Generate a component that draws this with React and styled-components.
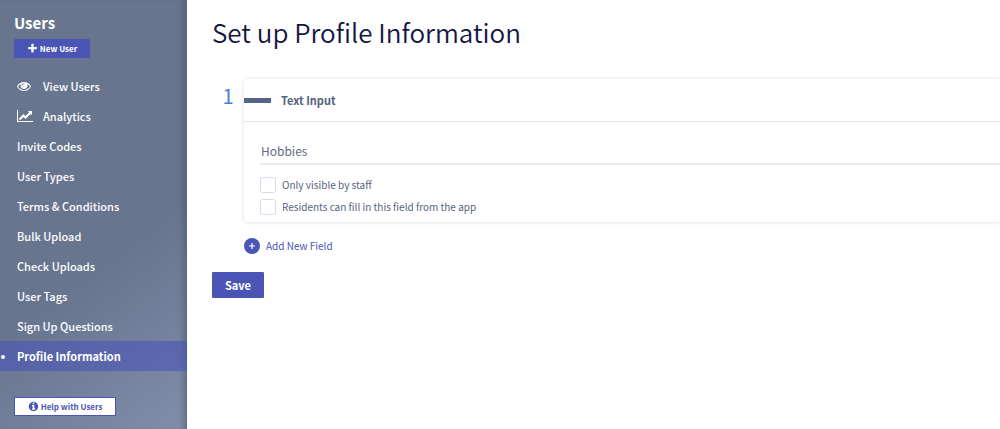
import React, { useState } from 'react';
import styled, { createGlobalStyle } from 'styled-components';

const GlobalStyle = createGlobalStyle`
  * {
    box-sizing: border-box;
  }

  body {
    margin: 0;
    background: #fff;
    overflow: hidden;
  }

  body, button, input {
    font-family: 'Noto Sans CJK SC', 'Noto Sans', sans-serif;
  }
`

const Layout = styled.div`
  display: flex;
  min-height: 100vh;
`

const Sidebar = styled.aside`
  flex: 0 0 187px;
  padding: 11px 0;
  color: #fff;
  background: linear-gradient(143deg, #68758f 0%, #68758f 60%, #818eab 100%);
  box-shadow: inset -1px 0 0 #5d6982, inset -7px 0 7px -4px rgba(50, 60, 85, 0.4);
`

const SidebarTitle = styled.h2`
  margin: 0 0 4px;
  padding: 0 14px;
  font-size: 15px;
  line-height: 24px;
  font-weight: 700;
`

const SmallButton = styled.button`
  display: flex;
  align-items: center;
  justify-content: center;
  gap: 2px;
  width: ${props => props.$outline ? '102px' : '76px'};
  height: 19px;
  margin: 0 14px;
  padding: 0;
  border: 1px solid #4a55b5;
  border-radius: ${props => props.$outline ? '0' : '1px'};
  background: ${props => props.$outline ? '#fff' : '#4a55b5'};
  color: ${props => props.$outline ? '#4a55b5' : '#fff'};
  font-size: 8px;
  line-height: 16px;
  font-weight: 700;
`

const Nav = styled.ul`
  margin: 13px 0 26px;
  padding: 0;
  list-style: none;
`

const NavLink = styled.a`
  display: flex;
  align-items: center;
  height: 30px;
  padding-left: 17px;
  position: relative;
  color: #fff;
  font-size: 11px;
  line-height: 30px;
  font-weight: ${props => props.$active ? 700 : 500};
  text-decoration: none;
  background: ${props => props.$active ? 'rgba(74, 85, 181, 0.6)' : 'transparent'};

  &::before {
    content: '';
    display: ${props => props.$active ? 'block' : 'none'};
    position: absolute;
    left: 1px;
    top: 14px;
    width: 4px;
    height: 4px;
    border-radius: 50%;
    background: #fff;
  }
`

const NavIcon = styled.span`
  display: flex;
  flex: 0 0 26px;
`

const Main = styled.main`
  flex: 1;
  min-width: 0;
  padding: 12px 0 12px 25px;
`

const PageTitle = styled.h1`
  margin: 0 0 27px;
  font-size: 26px;
  line-height: 40px;
  font-weight: 350;
  color: #14163f;
`

const Field = styled.div`
  display: flex;
`

const FieldNumber = styled.div`
  flex: 0 0 32px;
  text-align: center;
  font-size: 20px;
  line-height: 34px;
  font-weight: 400;
  color: #4480d2;
`

const Card = styled.section`
  flex: 1;
  min-width: 0;
  border-radius: 3px 0 0 3px;
  background: #fff;
  box-shadow: 0 0 4px rgba(0, 0, 0, 0.14);
`

const CardHeader = styled.header`
  display: flex;
  align-items: center;
  gap: 10px;
  height: 43px;
  border-bottom: 1px solid #e2e3ef;
`

const Handle = styled.span`
  width: 27px;
  height: 5px;
  background: #56648a;
`

const CardTitle = styled.h3`
  margin: 0;
  font-size: 11px;
  line-height: 20px;
  font-weight: 700;
  color: #56617b;
`

const CardBody = styled.div`
  display: flex;
  flex-direction: column;
  gap: 6px;
  padding: 16px 0 7px 16px;
`

const TextInput = styled.input`
  display: block;
  width: 100%;
  height: 27px;
  margin-bottom: 6px;
  padding: 0 1px;
  border: 0;
  border-bottom: 2px solid #e8e8f5;
  outline: 0;
  font-size: 12px;
  color: #626c83;
`

const CheckRow = styled.label`
  display: flex;
  align-items: center;
  gap: 6px;
  height: 16px;
  font-size: 10px;
  line-height: 16px;
  color: #58637c;
`

const Checkbox = styled.input`
  appearance: none;
  flex: none;
  width: 16px;
  height: 16px;
  margin: 0;
  border: 1px solid #d8dbea;
  border-radius: 3px;
  background: #fff;

  &:checked {
    background: #4a55b5;
  }
`

const AddButton = styled.button`
  display: flex;
  align-items: center;
  gap: 6px;
  margin: 16px 0 0 32px;
  padding: 0;
  border: 0;
  background: none;
  color: #4a55b5;
  font-size: 10px;
  line-height: 16px;
`

const SaveButton = styled.button`
  display: block;
  width: 52px;
  height: 26px;
  margin-top: 18px;
  padding: 0;
  border: 0;
  border-radius: 1px;
  background: #4a55b5;
  color: #fff;
  font-size: 11px;
  line-height: 26px;
  font-weight: 700;
`

const ICONS = {
  eye: {
    box: '0 0 1792 1792',
    path: 'M1664 960q-152-236-381-353 61 104 61 225 0 185-131.5 316.5t-316.5 131.5-316.5-131.5-131.5-316.5q0-121 61-225-229 117-381 353 133 205 333.5 326.5t434.5 121.5 434.5-121.5 333.5-326.5zm-720-384q0-20-14-34t-34-14q-125 0-214.5 89.5t-89.5 214.5q0 20 14 34t34 14 34-14 14-34q0-86 61-147t147-61q20 0 34-14t14-34zm848 384q0 34-20 69-140 230-376.5 368.5t-499.5 138.5-499.5-139-376.5-368q-20-35-20-69t20-69q140-229 376.5-368t499.5-139 499.5 139 376.5 368q20 35 20 69z',
  },
  chart: {
    box: '0 0 2048 1792',
    path: 'M2048 1536v128h-2048v-1536h128v1408h1920zm-128-1248v435q0 21-19.5 29.5t-35.5-7.5l-121-121-633 633q-10 10-23 10t-23-10l-233-233-416 416-192-192 585-585q10-10 23-10t23 10l233 233 464-464-121-121q-16-16-7.5-35.5t29.5-19.5h435q14 0 23 9t9 23z',
  },
  plus: {
    box: '0 0 1792 1792',
    path: 'M1600 736v192q0 40-28 68t-68 28h-416v416q0 40-28 68t-68 28h-192q-40 0-68-28t-28-68v-416h-416q-40 0-68-28t-28-68v-192q0-40 28-68t68-28h416v-416q0-40 28-68t68-28h192q40 0 68 28t28 68v416h416q40 0 68 28t28 68z',
  },
  info: {
    box: '0 0 1792 1792',
    path: 'M1152 1376v-160q0-14-9-23t-23-9h-96v-512q0-14-9-23t-23-9h-320q-14 0-23 9t-9 23v160q0 14 9 23t23 9h96v320h-96q-14 0-23 9t-9 23v160q0 14 9 23t23 9h448q14 0 23-9t9-23zm-128-896v-160q0-14-9-23t-23-9h-192q-14 0-23 9t-9 23v160q0 14 9 23t23 9h192q14 0 23-9t9-23zm640 416q0 209-103 385.5t-279.5 279.5-385.5 103-385.5-103-279.5-279.5-103-385.5 103-385.5 279.5-279.5 385.5-103 385.5 103 279.5 279.5 103 385.5z',
  },
}

function Icon({ name, width, height }) {
  return (
    <svg width={width} height={height} viewBox={ICONS[name].box} fill="currentColor" aria-hidden="true">
      <path d={ICONS[name].path} />
    </svg>
  );
}

const links = [
  { label: 'View Users', icon: 'eye', width: 14 },
  { label: 'Analytics', icon: 'chart', width: 16 },
  { label: 'Invite Codes' },
  { label: 'User Types' },
  { label: 'Terms & Conditions' },
  { label: 'Bulk Upload' },
  { label: 'Check Uploads' },
  { label: 'User Tags' },
  { label: 'Sign Up Questions' },
  { label: 'Profile Information', active: true },
]

function App() {
  const [name, setName] = useState('Hobbies');

  return (
    <Layout>
      <GlobalStyle />
      <Sidebar>
        <SidebarTitle>Users</SidebarTitle>
        <SmallButton type="button">
          <Icon name="plus" width={11} height={11} />
          New User
        </SmallButton>
        <Nav>
          {links.map(link => (
            <li key={link.label}>
              <NavLink href="#" $active={link.active}>
                {
                  link.icon ?
                    <NavIcon>
                      <Icon name={link.icon} width={link.width} height={14} />
                    </NavIcon> : null
                }
                {link.label}
              </NavLink>
            </li>
          ))}
        </Nav>
        <SmallButton type="button" $outline>
          <Icon name="info" width={11} height={11} />
          Help with Users
        </SmallButton>
      </Sidebar>

      <Main>
        <PageTitle>Set up Profile Information</PageTitle>
        <Field>
          <FieldNumber>1</FieldNumber>
          <Card>
            <CardHeader>
              <Handle />
              <CardTitle>Text Input</CardTitle>
            </CardHeader>
            <CardBody>
              <TextInput
                type="text"
                aria-label="Field name"
                value={name}
                onChange={e => setName(e.target.value)}
              />
              <CheckRow>
                <Checkbox type="checkbox" />
                Only visible by staff
              </CheckRow>
              <CheckRow>
                <Checkbox type="checkbox" />
                Residents can fill in this field from the app
              </CheckRow>
            </CardBody>
          </Card>
        </Field>
        <AddButton type="button">
          <svg width="16" height="16" viewBox="0 0 16 16" aria-hidden="true">
            <circle cx="8" cy="8" r="8" fill="#4a55b5" />
            <path d="M8 5v6M5 8h6" stroke="#fff" strokeWidth="1.2" />
          </svg>
          Add New Field
        </AddButton>
        <SaveButton type="button">Save</SaveButton>
      </Main>
    </Layout>
  );
}

export default App;
